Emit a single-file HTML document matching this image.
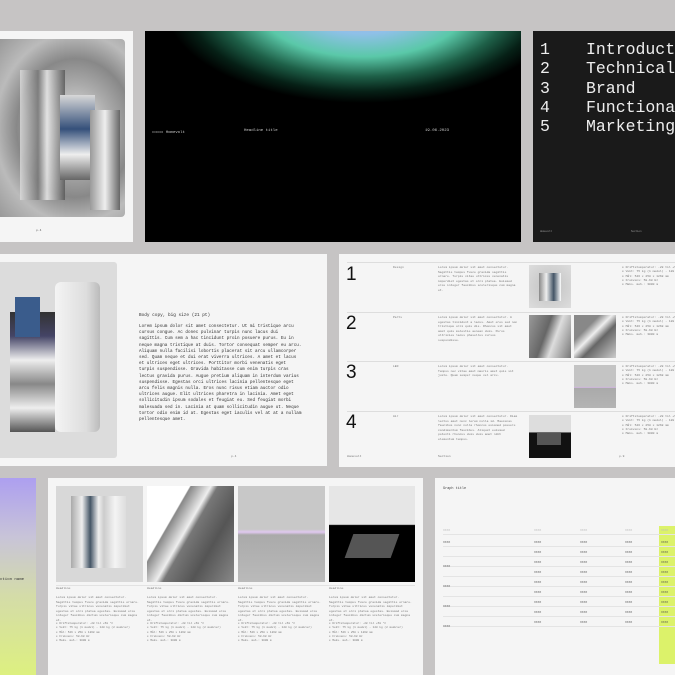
<!DOCTYPE html><html><head><style>
*{margin:0;padding:0;box-sizing:border-box}
body{width:675px;height:675px;overflow:hidden;background:#c6c4c4;position:relative;font-family:"Liberation Mono",monospace}
.a{position:absolute}
.w{background:#f5f5f5}
.t{font-size:3px;line-height:4.5px;color:#777}
.tt{font-size:4px;color:#555}
.b{font-size:3px;line-height:4.3px;color:#777}
.b div:before{content:"▪ ";color:#222}
.ln{position:absolute;height:1px;background:#ddd}
</style></head><body>
<!-- Row 1 -->
<div class="a w" style="left:0;top:31px;width:133px;height:211px"></div>
<div class="a" style="left:0;top:39px;width:125px;height:178px;border-radius:0 4px 4px 0;background:radial-gradient(ellipse at 60% 50%,#eee 0,#aaa 35%,#888 55%,#bbb 75%,#999 100%)"></div>
<div class="a" style="left:20px;top:70px;width:45px;height:130px;background:linear-gradient(90deg,#ddd,#777 40%,#eee 60%,#555);opacity:.8"></div>
<div class="a" style="left:60px;top:95px;width:35px;height:85px;background:linear-gradient(180deg,#d8d8d8,#35507a 40%,#eee 70%,#666)"></div>
<div class="a" style="left:90px;top:110px;width:30px;height:100px;background:linear-gradient(90deg,#999,#eee,#666)"></div>
<div class="a tt" style="left:36px;top:229px;font-size:3px">p.4</div>

<div class="a" style="left:145px;top:31px;width:376px;height:211px;background:#000;overflow:hidden">
<div class="a" style="left:0;top:-110px;width:376px;height:240px;background:radial-gradient(ellipse 62% 48% at 58% 35%,#b8a8f0 0,#8fc0e8 25%,#5ac8a8 45%,#1e6048 62%,#062016 75%,#000 85%)"></div>
<div class="a" style="left:7px;top:98px;font-size:4px;color:#ccc">▭▭▭ Homevolt</div>
<div class="a" style="left:99px;top:98px;font-size:4px;color:#ccc">Headline title</div>
<div class="a" style="left:280px;top:98px;font-size:4px;color:#ccc">19.06.2023</div>
</div>

<div class="a" style="left:533px;top:31px;width:142px;height:211px;background:#1a1a1a;color:#eee;font-size:16.5px;line-height:19.3px">
<div class="a" style="left:7px;top:9px">1<br>2<br>3<br>4<br>5</div>
<div class="a" style="left:53px;top:9px;white-space:nowrap">Introduction<br>Technical<br>Brand<br>Functional<br>Marketing</div>
<div class="a" style="left:7px;top:199px;font-size:2.5px;color:#999;line-height:3px">Homevolt</div>
<div class="a" style="left:98px;top:199px;font-size:2.5px;color:#999;line-height:3px">Section</div>
</div>

<!-- Row 2 -->
<div class="a w" style="left:0;top:254px;width:327px;height:212px"></div>
<div class="a" style="left:0;top:262px;width:117px;height:196px;background:#dcdcdc;border-radius:0 3px 3px 0;overflow:hidden">
<div class="a" style="left:55px;top:20px;width:45px;height:150px;background:linear-gradient(90deg,#f4f4f4,#ddd 70%,#bbb);border-radius:6px"></div>
<div class="a" style="left:10px;top:50px;width:45px;height:120px;background:linear-gradient(180deg,#333,#446 20%,#eee 40%,#888 60%,#eee 80%,#555)"></div>
<div class="a" style="left:15px;top:35px;width:25px;height:40px;background:#3a5c8c"></div>
</div>
<div class="a" style="left:139px;top:313px;font-size:4.4px;color:#333">Body copy, big size (21 pt)</div>
<div class="a" style="left:139px;top:324px;width:164px;font-size:4.3px;line-height:6.2px;color:#333">Lorem ipsum dolor sit amet consectetur. Ut mi tristique arcu cursus congue. Ac donec pulvinar turpis nunc lacus dui sagittis. Cum sem a hac tincidunt proin posuere purus. Eu in neque magna tristique at duis. Tortor consequat semper eu arcu. Aliquam nulla facilisi lobortis placerat sit arcu ullamcorper sed. Quam neque et dui erat viverra ultrices. A amet et lacus et ultrices eget ultrices. Porttitor morbi venenatis eget turpis suspendisse. Gravida habitasse cum enim turpis cras lectus gravida purus. Augue pretium aliquam in interdum varius suspendisse. Egestas orci ultrices lacinia pellentesque eget arcu felis magnis nulla. Eros nunc risus etiam auctor odio ultrices augue. Elit ultrices pharetra in lacinia. Amet eget sollicitudin ipsum sodales et feugiat eu. Sed feugiat morbi malesuada sed in. Lacinia at quam sollicitudin augue ut. Neque tortor odio enim id at. Egestas eget iaculis vel at at a nullam pellentesque amet.</div>
<div class="a" style="left:231px;top:455px;font-size:3px;color:#777">p.4</div>

<div class="a w" style="left:339px;top:254px;width:336px;height:213px"></div>
<div class="ln" style="left:347px;top:262px;width:328px"></div>
<div class="ln" style="left:347px;top:312px;width:328px"></div>
<div class="ln" style="left:347px;top:361px;width:328px"></div>
<div class="ln" style="left:347px;top:411px;width:328px"></div>

<div class="a" style="left:346px;top:264px;font-family:'Liberation Sans',sans-serif;font-size:19px;color:#111">1</div>
<div class="a" style="left:346px;top:313px;font-family:'Liberation Sans',sans-serif;font-size:19px;color:#111">2</div>
<div class="a" style="left:346px;top:362px;font-family:'Liberation Sans',sans-serif;font-size:19px;color:#111">3</div>
<div class="a" style="left:346px;top:412px;font-family:'Liberation Sans',sans-serif;font-size:19px;color:#111">4</div>

<div class="a t" style="left:393px;top:266px">Design</div>
<div class="a t" style="left:393px;top:316px">Parts</div>
<div class="a t" style="left:393px;top:365px">LED</div>
<div class="a t" style="left:393px;top:415px">Air</div>

<div class="a t" style="left:438px;top:266px;width:80px">Lorem ipsum dolor sit amet consectetur. Sagittis tempus fusce gravida sagittis ornare. Turpis vitae ultrices venenatis imperdiet egestas et orci platea. Euismod eros integer faucibus scelerisque cum magna et.</div>
<div class="a t" style="left:438px;top:316px;width:80px">Lorem ipsum dolor sit amet consectetur. A egestas tincidunt a lacus. Amet eros sed non tristique orci quis dis. Rhoncus sit amet amet quis molestie aenean duis. Purus ultricies lacus phasellus cursus suspendisse.</div>
<div class="a t" style="left:438px;top:365px;width:80px">Lorem ipsum dolor sit amet consectetur. Tempus nec vitae amet mauris amet quis sit justo. Quam semper neque vel arcu.</div>
<div class="a t" style="left:438px;top:415px;width:80px">Lorem ipsum dolor sit amet consectetur. Diam lectus amet nunc lorem nulla id. Maecenas faucibus nunc nulla rhoncus euismod posuere condimentum faucibus. Aliquet euismod potenti rhoncus duis duis amet nibh elementum tempus.</div>

<div class="a" style="left:529px;top:265px;width:42px;height:43px;background:radial-gradient(circle,#eee,#ccc 40%,#ddd);"><div class="a" style="left:10px;top:8px;width:22px;height:28px;background:linear-gradient(90deg,#888,#eee,#456,#fff)"></div></div>
<div class="a" style="left:529px;top:315px;width:42px;height:43px;background:linear-gradient(110deg,#999,#666 40%,#ddd 60%,#777)"></div>
<div class="a" style="left:574px;top:315px;width:42px;height:43px;background:linear-gradient(135deg,#888 30%,#eee 45%,#666 60%,#ccc)"></div>
<div class="a" style="left:574px;top:365px;width:42px;height:43px;background:linear-gradient(180deg,#c4c4c4 50%,#d8b8e8 52%,#aaa 54%,#b4b4b4)"></div>
<div class="a" style="left:529px;top:415px;width:42px;height:43px;background:linear-gradient(180deg,#ddd 40%,#111 41%)"><div class="a" style="left:8px;top:18px;width:24px;height:12px;background:#555"></div></div>

<div class="a b" style="left:622px;top:266px;white-space:nowrap"><div>Driftstemperatur: -28 til +58</div><div>Vekt: 75 kg (1 modul) - 128 kg</div><div>Mål: 546 x 258 x 1268 mm</div><div>Frekvens: 58-68 Hz</div><div>Maks. moh.: 3000 m</div></div>
<div class="a b" style="left:622px;top:316px;white-space:nowrap"><div>Driftstemperatur: -28 til +58</div><div>Vekt: 75 kg (1 modul) - 128 kg</div><div>Mål: 546 x 258 x 1268 mm</div><div>Frekvens: 58-68 Hz</div><div>Maks. moh.: 3000 m</div></div>
<div class="a b" style="left:622px;top:365px;white-space:nowrap"><div>Driftstemperatur: -28 til +58</div><div>Vekt: 75 kg (1 modul) - 128 kg</div><div>Mål: 546 x 258 x 1268 mm</div><div>Frekvens: 58-68 Hz</div><div>Maks. moh.: 3000 m</div></div>
<div class="a b" style="left:622px;top:415px;white-space:nowrap"><div>Driftstemperatur: -28 til +58</div><div>Vekt: 75 kg (1 modul) - 128 kg</div><div>Mål: 546 x 258 x 1268 mm</div><div>Frekvens: 58-68 Hz</div><div>Maks. moh.: 3000 m</div></div>
<div class="a t" style="left:347px;top:455px">Homevolt</div>
<div class="a t" style="left:438px;top:455px">Section</div>
<div class="a t" style="left:619px;top:455px">p.9</div>

<!-- Row 3 -->
<div class="a" style="left:0;top:478px;width:36px;height:197px;background:linear-gradient(180deg,#ad9ff0 0,#c8c4d8 30%,#d4dca8 60%,#ddf080 100%)"></div>
<div class="a" style="left:0;top:578px;font-size:4px;color:#333">ction name</div>

<div class="a w" style="left:48px;top:478px;width:375px;height:197px"></div>
<div class="a" style="left:56px;top:486px;width:87px;height:96px;background:#d8d8d8"><div class="a" style="left:15px;top:10px;width:55px;height:72px;background:linear-gradient(90deg,#aaa,#eee 20%,#456 35%,#eee 50%,#ccc 60%,#f4f4f4 80%,#ddd)"></div></div>
<div class="a" style="left:147px;top:486px;width:87px;height:96px;background:linear-gradient(120deg,#fff 30%,#888 31%,#eee 45%,#777 50%,#555 70%,#888)"></div>
<div class="a" style="left:238px;top:486px;width:87px;height:96px;background:linear-gradient(180deg,#c8c8c8 45%,#e0c8f0 48%,#aaa 51%,#bababa)"></div>
<div class="a" style="left:329px;top:486px;width:86px;height:96px;background:linear-gradient(180deg,#e6e6e6 40%,#000 41%)"><div class="a" style="left:20px;top:48px;width:46px;height:24px;background:#555;transform:skewX(-20deg)"></div></div>

<div class="ln" style="left:56px;top:585px;width:359px;background:#e2e2e2"></div>
<div class="a t" style="left:56px;top:587px">Headline</div>
<div class="a t" style="left:147px;top:587px">Headline</div>
<div class="a t" style="left:238px;top:587px">Headline</div>
<div class="a t" style="left:329px;top:587px">Headline</div>
<div class="a t" style="left:56px;top:596px;width:85px">Lorem ipsum dolor sit amet consectetur. Sagittis tempus fusce gravida sagittis ornare. Turpis vitae ultrices venenatis imperdiet egestas et orci platea egestas. Euismod eros integer faucibus dictum scelerisque cum magna et.</div>
<div class="a t" style="left:147px;top:596px;width:85px">Lorem ipsum dolor sit amet consectetur. Sagittis tempus fusce gravida sagittis ornare. Turpis vitae ultrices venenatis imperdiet egestas et orci platea egestas. Euismod eros integer faucibus dictum scelerisque cum magna et.</div>
<div class="a t" style="left:238px;top:596px;width:85px">Lorem ipsum dolor sit amet consectetur. Sagittis tempus fusce gravida sagittis ornare. Turpis vitae ultrices venenatis imperdiet egestas et orci platea egestas. Euismod eros integer faucibus dictum scelerisque cum magna et.</div>
<div class="a t" style="left:329px;top:596px;width:85px">Lorem ipsum dolor sit amet consectetur. Sagittis tempus fusce gravida sagittis ornare. Turpis vitae ultrices venenatis imperdiet egestas et orci platea egestas. Euismod eros integer faucibus dictum scelerisque cum magna et.</div>
<div class="a b" style="left:56px;top:622px;white-space:nowrap;font-size:2.8px"><div>Driftstemperatur: -28 til +58 °C</div><div>Vekt: 75 kg (1 modul) - 128 kg (2 moduler)</div><div>Mål: 546 x 258 x 1268 mm</div><div>Frekvens: 58-68 Hz</div><div>Maks. moh.: 3000 m</div></div>
<div class="a b" style="left:147px;top:622px;white-space:nowrap;font-size:2.8px"><div>Driftstemperatur: -28 til +58 °C</div><div>Vekt: 75 kg (1 modul) - 128 kg (2 moduler)</div><div>Mål: 546 x 258 x 1268 mm</div><div>Frekvens: 58-68 Hz</div><div>Maks. moh.: 3000 m</div></div>
<div class="a b" style="left:238px;top:622px;white-space:nowrap;font-size:2.8px"><div>Driftstemperatur: -28 til +58 °C</div><div>Vekt: 75 kg (1 modul) - 128 kg (2 moduler)</div><div>Mål: 546 x 258 x 1268 mm</div><div>Frekvens: 58-68 Hz</div><div>Maks. moh.: 3000 m</div></div>
<div class="a b" style="left:329px;top:622px;white-space:nowrap;font-size:2.8px"><div>Driftstemperatur: -28 til +58 °C</div><div>Vekt: 75 kg (1 modul) - 128 kg (2 moduler)</div><div>Mål: 546 x 258 x 1268 mm</div><div>Frekvens: 58-68 Hz</div><div>Maks. moh.: 3000 m</div></div>

<div class="a w" style="left:435px;top:478px;width:240px;height:197px"></div>
<div class="a t" style="left:443px;top:487px;font-size:3.5px;color:#444">Graph title</div>
<div class="a" style="left:659px;top:526px;width:16px;height:138px;background:#dcf26a"></div>
<div id="tbl"></div>
<script>
var h='';var ys=[529,541,551,561,571,581,591,601,611,621];
for(var i=0;i<ys.length;i++){var y=ys[i];var c=i==0?'#bbb':'#555';
h+='<div class="ln" style="left:443px;top:'+(y+5)+'px;width:232px;background:#e4e4e4"></div>';
if(i==0)h+='<div class="a" style="left:443px;top:'+y+'px;font-size:3px;color:#bbb">XXXX</div>';
else if(i%2==1)h+='<div class="a" style="left:443px;top:'+(y+(i==1?0:4))+'px;font-size:3px;color:#555">XXXX</div>';
[534,580,625,661].forEach(function(x){h+='<div class="a" style="left:'+x+'px;top:'+y+'px;font-size:3px;color:'+c+'">XXXX</div>';});}
document.getElementById('tbl').innerHTML=h;
</script>
</body></html>
